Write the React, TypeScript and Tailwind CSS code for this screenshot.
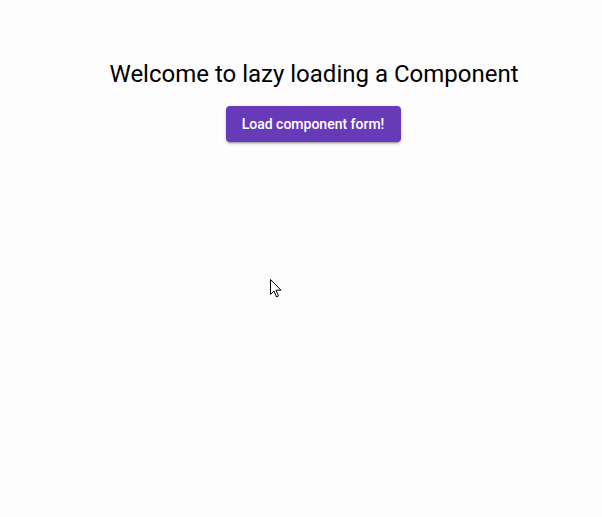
function Pointer() {
  return (
    <svg
      width="13"
      height="20"
      viewBox="0 0 13 20"
      className="absolute left-[270px] top-[279px]"
      aria-hidden="true"
    >
      <path
        d="M0.5 0.5 L0.5 15.5 L4 12 L6.5 18 L8.5 17 L6 11.2 L11 11.2 Z"
        fill="#fff"
        stroke="#000"
        strokeWidth="1"
        strokeLinejoin="miter"
      />
    </svg>
  );
}

function App() {
  return (
    <div className="relative min-h-screen w-full bg-[#fdfdfd] font-['Roboto',sans-serif]">
      <div className="flex flex-col items-center pl-[26px] pt-[58px]">
        <h1 className="text-[24px] leading-[32px] font-normal text-black">
          Welcome to lazy loading a Component
        </h1>
        <button
          type="button"
          className="mr-[2px] mt-[16px] h-[36px] w-[175px] rounded-[4px] bg-[#673ab7] text-[14px] font-medium text-white shadow-[0_3px_1px_-2px_rgba(0,0,0,0.2),0_2px_2px_0_rgba(0,0,0,0.14),0_1px_5px_0_rgba(0,0,0,0.12)]"
        >
          Load component form!
        </button>
      </div>
      <Pointer />
    </div>
  );
}

export default App;
